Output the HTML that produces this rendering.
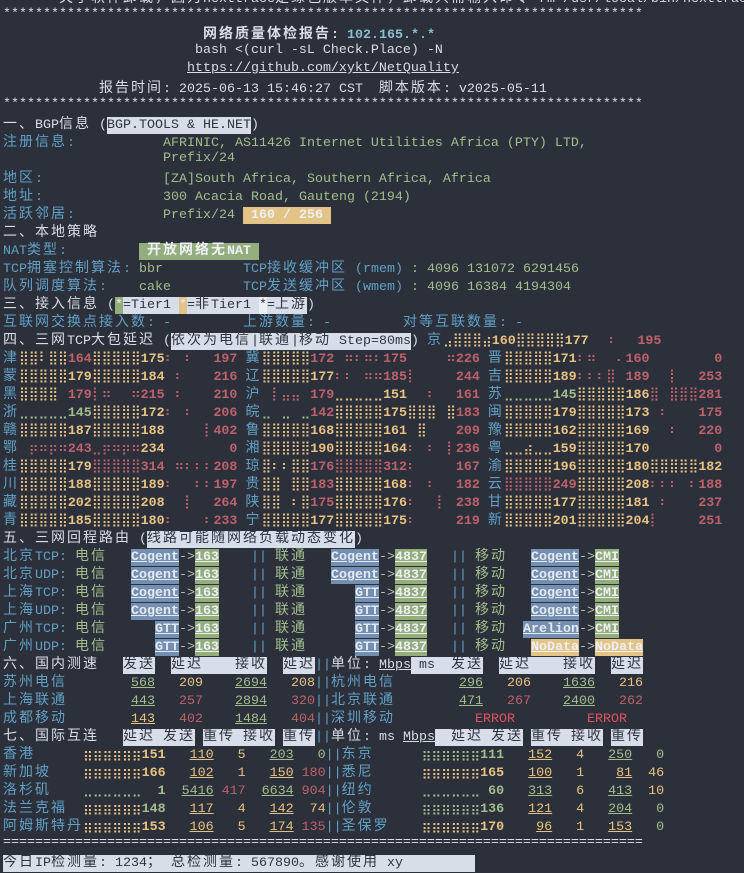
<!DOCTYPE html>
<html><head><meta charset="utf-8">
<style>
html,body{margin:0;padding:0;background:#2b303b;width:744px;height:856px;overflow:hidden}
#t{position:absolute;left:3px;top:-12px;font-family:"Liberation Mono","DejaVu Sans Mono",monospace;font-size:13.33px;color:#d8dee9}
#t div{height:18px;line-height:18px;white-space:pre}
i{font-style:normal;font-family:"Noto Sans CJK SC","WenQuanYi Zen Hei",sans-serif;font-size:14px;letter-spacing:2px}
b{font-weight:bold}
.c{color:#62a0c4}.g{color:#a3be8c}.y{color:#e8c282}.r{color:#bf616a}.e{color:#e0525b}
.cy{color:#88c0d0}
.u{text-decoration:underline}
.hl{background:#d8dee9;color:#2e3440;padding:1px 0}
.bb{background:#7390b2;color:#e5e9f0;font-weight:bold;text-decoration:underline;padding:1px 0}
.gb{background:#93ad7c;color:#eceff4;font-weight:bold;text-decoration:underline;padding:1px 0}
.yb{background:#e4c387;color:#eceff4;font-weight:bold;padding:1px 0}
.wb{background:#eceff4;color:#2e3440;padding:1px 0}
.ar{color:#b8c2b0}
.bd{font-family:"DejaVu Sans Mono",monospace}
</style></head><body>
<div id="t">
<div>       <i>关于软件卸载，因为</i>nexttrace<i>是绿色版单文件，卸载只需输入命令</i> rm /usr/local/bin/nexttrace</div>
<div>********************************************************************************</div>
<div>                         <b><i>网络质量体检报告</i>:</b> <b class="cy">102.165.*.*</b></div>
<div>                        bash &lt;(curl -sL Check.Place) -N</div>
<div>                       <span class="u">https://github.com/xykt/NetQuality</span></div>
<div>            <i>报告时间</i>: 2025-06-13 15:46:27 CST  <i>脚本版本</i>: <span>v2025-05-11</span></div>
<div>********************************************************************************</div>
<div><i>一、</i>BGP<i>信息</i> (<span class="hl">BGP.TOOLS &amp; HE.NET</span>)</div>
<div><span class="c"><i>注册信息</i>:</span>           <span class="g">AFRINIC, AS11426 Internet Utilities Africa (PTY) LTD,</span></div>
<div>                    <span class="g">Prefix/24</span></div>
<div><span class="c"><i>地区</i>:</span>               <span class="g">[ZA]South Africa, Southern Africa, Africa</span></div>
<div><span class="c"><i>地址</i>:</span>               <span class="g">300 Acacia Road, Gauteng (2194)</span></div>
<div><span class="c"><i>活跃邻居</i>:</span>           <span class="g">Prefix/24 </span><span class="yb"> 160 / 256 </span></div>
<div><i>二、本地策略</i></div>
<div><span class="c">NAT<i>类型</i>:</span>         <span class="gb" style="text-decoration:none"> <i>开放网络无</i>NAT </span></div>
<div><span class="c">TCP<i>拥塞控制算法</i>:</span> <span class="g">bbr</span>          <span class="c">TCP<i>接收缓冲区</i> (rmem) </span><span class="g">: 4096 131072 6291456</span></div>
<div><span class="c"><i>队列调度算法</i>:</span>    <span class="g">cake</span>         <span class="c">TCP<i>发送缓冲区</i> (wmem) </span><span class="g">: 4096 16384 4194304</span></div>
<div><i>三、接入信息</i> (<span class="gb" style="text-decoration:none;font-weight:normal">*</span><span class="hl">=Tier1 </span><span class="yb" style="font-weight:normal">*</span><span class="hl">=<i>非</i>Tier1 </span><span class="wb">*</span><span class="hl">=<i>上游</i></span>)</div>
<div><span class="c"><i>互联网交换点接入数</i>: -</span>         <span class="c"><i>上游数量</i>: -</span>         <span class="c"><i>对等互联数量</i>: -</span></div>
<div><i>四、三网</i>TCP<i>大包延迟</i> (<span class="hl"><i>依次为电信</i>|<i>联通</i>|<i>移动</i> Step=80ms</span>) <span class="c"><i>京</i></span><span class="y bd">⣠⣿⣿⣿⣴</span><b class="y">160</b><span class="y bd">⣿⣿⣿⣿⣿</span><b class="y">177</b><span class="r bd">⠀⠀⠆⠀⠀</span><b class="r">195</b></div>
<div><span class="c"><i>津</i></span><span class="y bd">⣿⣿⠇⣿⣿</span><b class="r">164</b><span class="y bd">⣿⣿⣿⣿⣿</span><b class="y">175</b><span class="r bd">⠆⠀⠆⠀⠀</span><b class="r">197</b> <span class="c"><i>冀</i></span><span class="y bd">⣿⣿⣿⣿⣿</span><b class="r">172</b><span class="r bd">⠀⠶⠆⠶⠆</span><b class="r">175</b><span class="r bd">⠀⠀⠀⠀⠶</span><b class="r">226</b> <span class="c"><i>晋</i></span><span class="y bd">⣿⣿⣿⣿⣿</span><b class="y">171</b><span class="r bd">⠆⠶⠀⠀⠄</span><b class="r">160</b><span class="r bd">⠀⠀⠀⠀⠀</span><b class="r">  0</b></div>
<div><span class="c"><i>蒙</i></span><span class="y bd">⣿⣿⣿⣿⣿</span><b class="y">179</b><span class="y bd">⣿⣿⣿⣿⣿</span><b class="y">184</b><span class="r bd">⠀⠆⠀⠀⠀</span><b class="r">216</b> <span class="c"><i>辽</i></span><span class="y bd">⣿⣿⣿⣿⣿</span><b class="y">177</b><span class="r bd">⠆⠆⠀⠶⠶</span><b class="r">185</b><span class="r bd">⡇⠀⠀⠀⠀</span><b class="r">244</b> <span class="c"><i>吉</i></span><span class="y bd">⣿⣿⣿⣿⣿</span><b class="y">189</b><span class="r bd">⠆⠆⠆⣿⠀</span><b class="r">189</b><span class="r bd">⠀⠀⡇⠀⠀</span><b class="r">253</b></div>
<div><span class="c"><i>黑</i></span><span class="y bd">⣿⣿⣿⣿⠀</span><b class="r">179</b><span class="r bd">⡇⠶⠀⠀⠶</span><b class="r">215</b><span class="r bd">⠀⠆⠀⠀⠀</span><b class="r">210</b> <span class="c"><i>沪</i></span><span class="r bd">⠀⡇⣤⣤⠀</span><b class="r">179</b><span class="y bd">⣀⣀⣀⣀⣀</span><b class="y">151</b><span class="r bd">⠀⠀⠆⠀⠀</span><b class="r">161</b> <span class="c"><i>苏</i></span><span class="g bd">⣀⣀⣀⣀⣀</span><b class="g">145</b><span class="y bd">⣿⣿⣿⣿⣿</span><b class="y">186</b><span class="r bd">⣿⠀⣿⣿⣿</span><b class="r">281</b></div>
<div><span class="c"><i>浙</i></span><span class="g bd">⣀⣀⣀⣀⣀</span><b class="g">145</b><span class="y bd">⣿⣿⣿⣿⣿</span><b class="y">172</b><span class="r bd">⠆⠀⠆⠀⠀</span><b class="r">206</b> <span class="c"><i>皖</i></span><span class="g bd">⣀⠀⣀⠀⣀</span><b class="r">142</b><span class="y bd">⣿⣿⣿⣿⣿</span><b class="y">175</b><span class="y bd">⣿⣿⣿⠀⣿</span><b class="r">183</b> <span class="c"><i>闽</i></span><span class="y bd">⣿⣿⣿⣿⣿</span><b class="y">179</b><span class="y bd">⣿⣿⣿⣿⣿</span><b class="y">173</b><span class="r bd">⠀⠆⠀⠀⠀</span><b class="r">175</b></div>
<div><span class="c"><i>赣</i></span><span class="y bd">⣿⣿⣿⣿⣿</span><b class="y">187</b><span class="y bd">⣿⣿⣿⣿⣿</span><b class="y">188</b><span class="r bd">⠀⠀⠀⠀⡇</span><b class="r">402</b> <span class="c"><i>鲁</i></span><span class="y bd">⣿⣿⣿⣿⣿</span><b class="y">168</b><span class="y bd">⣿⣿⣿⣿⣿</span><b class="y">161</b><span class="y bd">⠀⣿⠀⠀⠀</span><b class="r">209</b> <span class="c"><i>豫</i></span><span class="y bd">⣿⣿⣿⣿⣿</span><b class="y">162</b><span class="y bd">⣿⣿⣿⣿⣿</span><b class="y">169</b><span class="r bd">⠀⠀⠆⠀⠀</span><b class="r">220</b></div>
<div><span class="c"><i>鄂</i></span><span class="r bd">⠀⡶⠶⡶⠶</span><b class="r">243</b><span class="r bd">⣀⡶⠶⡶⠶</span><b class="y">234</b><span class="r bd">⠀⠀⠀⠀⠀</span><b class="r">  0</b> <span class="c"><i>湘</i></span><span class="y bd">⣿⣿⣿⣿⣿</span><b class="y">190</b><span class="y bd">⣿⣿⣿⣿⣿</span><b class="y">164</b><span class="r bd">⠆⠀⠆⠀⡇</span><b class="r">236</b> <span class="c"><i>粤</i></span><span class="y bd">⣀⣀⣴⣀⣀</span><b class="y">159</b><span class="y bd">⣿⣿⣿⣿⣿</span><b class="y">170</b><span class="r bd">⠀⠀⠀⠀⠀</span><b class="r">  0</b></div>
<div><span class="c"><i>桂</i></span><span class="y bd">⣿⣿⣿⣿⣿</span><b class="y">179</b><span class="r bd">⣿⣿⣿⣿⣿</span><b class="r">314</b><span class="r bd">⠀⠶⠆⠆⠆</span><b class="r">208</b> <span class="c"><i>琼</i></span><span class="y bd">⣿⠆⠆⣿⣿</span><b class="r">176</b><span class="r bd">⣿⣿⣿⣿⣿</span><b class="r">312</b><span class="r bd">⠆⠀⠀⠀⠀</span><b class="r">167</b> <span class="c"><i>渝</i></span><span class="y bd">⣿⣿⣿⣿⣿</span><b class="y">196</b><span class="y bd">⣿⣿⣿⣿⣿</span><b class="y">180</b><span class="y bd">⣿⣿⣿⣿⣿</span><b class="y">182</b></div>
<div><span class="c"><i>川</i></span><span class="y bd">⣿⣿⣿⣿⣿</span><b class="y">188</b><span class="y bd">⣿⣿⣿⣿⣿</span><b class="y">189</b><span class="r bd">⠆⠀⠀⠆⠆</span><b class="r">197</b> <span class="c"><i>贵</i></span><span class="y bd">⣿⣿⠀⣿⣿</span><b class="r">183</b><span class="y bd">⣿⣿⣿⣿⣿</span><b class="y">168</b><span class="r bd">⠆⠀⠆⠀⠀</span><b class="r">182</b> <span class="c"><i>云</i></span><span class="r bd">⣿⣿⣿⣿⣿</span><b class="r">249</b><span class="y bd">⣿⣿⣿⣿⣿</span><b class="y">208</b><span class="r bd">⠆⠆⠆⠀⠆</span><b class="r">188</b></div>
<div><span class="c"><i>藏</i></span><span class="y bd">⣿⣿⣿⣿⣿</span><b class="y">202</b><span class="y bd">⣿⣿⣿⣿⣿</span><b class="y">208</b><span class="r bd">⠀⠀⡇⠀⠀</span><b class="r">264</b> <span class="c"><i>陕</i></span><span class="y bd">⣿⣿⠀⠆⣿</span><b class="r">175</b><span class="y bd">⣿⣿⣿⣿⣿</span><b class="y">176</b><span class="r bd">⠆⠀⠀⡇⠀</span><b class="r">238</b> <span class="c"><i>甘</i></span><span class="y bd">⣿⣿⣿⣿⣿</span><b class="y">177</b><span class="y bd">⣿⣿⣿⣿⣿</span><b class="y">181</b><span class="r bd">⠀⠆⠀⠀⠀</span><b class="r">237</b></div>
<div><span class="c"><i>青</i></span><span class="y bd">⣿⣿⣿⣿⣿</span><b class="y">185</b><span class="y bd">⣿⣿⣿⣿⣿</span><b class="y">180</b><span class="r bd">⠆⠀⠀⠀⠆</span><b class="r">233</b> <span class="c"><i>宁</i></span><span class="y bd">⣿⣿⣿⣿⣿</span><b class="y">177</b><span class="y bd">⣿⣿⣿⣿⣿</span><b class="y">175</b><span class="r bd">⠆⠀⠀⠀⠀</span><b class="r">219</b> <span class="c"><i>新</i></span><span class="y bd">⣿⣿⣿⣿⣿</span><b class="y">201</b><span class="y bd">⣿⣿⣿⣿⣿</span><b class="y">204</b><span class="r bd">⡇⠀⠀⠀⠀</span><b class="r">251</b></div>
<div><i>五、三网回程路由</i> (<span class="hl"><i>线路可能随网络负载动态变化</i></span>)</div>
<div><span class="c"><i>北京</i>TCP:</span> <span class="g"><i>电信</i></span>   <span class="bb">Cogent</span><span class="ar">-&gt;</span><span class="gb">163</span>    <span class="c">||</span> <span class="g"><i>联通</i></span>   <span class="bb">Cogent</span><span class="ar">-&gt;</span><span class="gb">4837</span>   <span class="c">||</span> <span class="g"><i>移动</i></span>   <span class="bb">Cogent</span><span class="ar">-&gt;</span><span class="gb">CMI</span></div>
<div><span class="c"><i>北京</i>UDP:</span> <span class="g"><i>电信</i></span>   <span class="bb">Cogent</span><span class="ar">-&gt;</span><span class="gb">163</span>    <span class="c">||</span> <span class="g"><i>联通</i></span>   <span class="bb">Cogent</span><span class="ar">-&gt;</span><span class="gb">4837</span>   <span class="c">||</span> <span class="g"><i>移动</i></span>   <span class="bb">Cogent</span><span class="ar">-&gt;</span><span class="gb">CMI</span></div>
<div><span class="c"><i>上海</i>TCP:</span> <span class="g"><i>电信</i></span>   <span class="bb">Cogent</span><span class="ar">-&gt;</span><span class="gb">163</span>    <span class="c">||</span> <span class="g"><i>联通</i></span>      <span class="bb">GTT</span><span class="ar">-&gt;</span><span class="gb">4837</span>   <span class="c">||</span> <span class="g"><i>移动</i></span>   <span class="bb">Cogent</span><span class="ar">-&gt;</span><span class="gb">CMI</span></div>
<div><span class="c"><i>上海</i>UDP:</span> <span class="g"><i>电信</i></span>   <span class="bb">Cogent</span><span class="ar">-&gt;</span><span class="gb">163</span>    <span class="c">||</span> <span class="g"><i>联通</i></span>      <span class="bb">GTT</span><span class="ar">-&gt;</span><span class="gb">4837</span>   <span class="c">||</span> <span class="g"><i>移动</i></span>   <span class="bb">Cogent</span><span class="ar">-&gt;</span><span class="gb">CMI</span></div>
<div><span class="c"><i>广州</i>TCP:</span> <span class="g"><i>电信</i></span>      <span class="bb">GTT</span><span class="ar">-&gt;</span><span class="gb">163</span>    <span class="c">||</span> <span class="g"><i>联通</i></span>      <span class="bb">GTT</span><span class="ar">-&gt;</span><span class="gb">4837</span>   <span class="c">||</span> <span class="g"><i>移动</i></span>  <span class="bb">Arelion</span><span class="ar">-&gt;</span><span class="gb">CMI</span></div>
<div><span class="c"><i>广州</i>UDP:</span> <span class="g"><i>电信</i></span>      <span class="bb">GTT</span><span class="ar">-&gt;</span><span class="gb">163</span>    <span class="c">||</span> <span class="g"><i>联通</i></span>      <span class="bb">GTT</span><span class="ar">-&gt;</span><span class="gb">4837</span>   <span class="c">||</span> <span class="g"><i>移动</i></span>   <span class="yb" style="text-decoration:underline">NoData</span><span class="ar">-&gt;</span><span class="yb" style="text-decoration:underline">NoData</span></div>
<div><i>六、国内测速</i>   <span class="hl"><i>发送</i></span>  <span class="hl"><i>延迟</i>    <i>接收</i></span>  <span class="hl"><i>延迟</i></span><span class="c">||</span><i>单位</i>: <span class="u">Mbps</span><span class="hl"> ms  <i>发送</i></span>  <span class="hl"><i>延迟</i>    <i>接收</i></span>  <span class="hl"><i>延迟</i></span></div>
<div><span class="c"><i>苏州电信</i></span>        <span class="g u">568</span>   <span class="y">209</span>    <span class="g u">2694</span>   <span class="y">208</span><span class="c">||<i>杭州电信</i></span>        <span class="g u">296</span>   <span class="y">206</span>    <span class="g u">1636</span>   <span class="y">216</span></div>
<div><span class="c"><i>上海联通</i></span>        <span class="g u">443</span>   <span class="r">257</span>    <span class="g u">2894</span>   <span class="r">320</span><span class="c">||<i>北京联通</i></span>        <span class="g u">471</span>   <span class="r">267</span>    <span class="g u">2400</span>   <span class="r">262</span></div>
<div><span class="c"><i>成都移动</i></span>        <span class="y u">143</span>   <span class="r">402</span>    <span class="g u">1484</span>   <span class="r">404</span><span class="c">||<i>深圳移动</i></span>          <span class="e">ERROR</span>         <span class="e">ERROR</span></div>
<div><i>七、国际互连</i>   <span class="hl"><i>延迟</i> <i>发送</i></span> <span class="hl"><i>重传</i> <i>接收</i></span> <span class="hl"><i>重传</i></span><span class="c">||</span><i>单位</i>: ms <span class="u">Mbps</span><span class="hl">  <i>延迟</i> <i>发送</i></span> <span class="hl"><i>重传</i> <i>接收</i></span> <span class="hl"><i>重传</i></span></div>
<div><span class="c"><i>香港</i></span>      <span class="y bd">⣶⣶⣶⣶⣶⣶</span><b class="y">151</b>   <span class="y u">110</span>   <span class="y">5</span>   <span class="g u">203</span>   <span class="g">0</span><span class="c">||<i>东京</i></span>      <span class="g bd">⣶⣶⣶⣶⣶⣶</span><b class="g">111</b>   <span class="y u">152</span>   <span class="y">4</span>   <span class="g u">250</span>   <span class="g">0</span></div>
<div><span class="c"><i>新加坡</i></span>    <span class="y bd">⣶⣶⣶⣶⣶⣶</span><b class="y">166</b>   <span class="y u">102</span>   <span class="y">1</span>   <span class="y u">150</span> <span class="r">180</span><span class="c">||<i>悉尼</i></span>      <span class="y bd">⣶⣶⣶⣶⣶⣶</span><b class="y">165</b>   <span class="y u">100</span>   <span class="y">1</span>    <span class="y u">81</span>  <span class="y">46</span></div>
<div><span class="c"><i>洛杉矶</i></span>    <span class="g bd">⣀⣀⣀⣀⣀⣀</span><b class="g">  1</b>  <span class="g u">5416</span> <span class="r">417</span>  <span class="g u">6634</span> <span class="r">904</span><span class="c">||<i>纽约</i></span>      <span class="g bd">⣀⣀⣀⣀⣀⣀</span><b class="g"> 60</b>   <span class="g u">313</span>   <span class="y">6</span>   <span class="g u">413</span>  <span class="y">10</span></div>
<div><span class="c"><i>法兰克福</i></span>  <span class="y bd">⣶⣶⣶⣶⣶⣶</span><b class="g">148</b>   <span class="y u">117</span>   <span class="y">4</span>   <span class="y u">142</span>  <span class="y">74</span><span class="c">||<i>伦敦</i></span>      <span class="g bd">⣶⣶⣶⣶⣶⣶</span><b class="g">136</b>   <span class="y u">121</span>   <span class="y">4</span>   <span class="g u">204</span>   <span class="g">0</span></div>
<div><span class="c"><i>阿姆斯特丹</i></span><span class="y bd">⣶⣶⣶⣶⣶⣶</span><b class="y">153</b>   <span class="y u">106</span>   <span class="y">5</span>   <span class="y u">174</span> <span class="r">135</span><span class="c">||<i>圣保罗</i></span>    <span class="y bd">⣶⣶⣶⣶⣶⣶</span><b class="y">170</b>    <span class="y u">96</span>   <span class="y">1</span>   <span class="y u">153</span>   <span class="g">0</span></div>
<div>================================================================================</div>
<div><span class="hl"><i>今日</i>IP<i>检测量</i>: 1234<i>；</i> <i>总检测量</i>: 567890<i>。感谢使用</i> xy         </span></div>
</div>
</body></html>
